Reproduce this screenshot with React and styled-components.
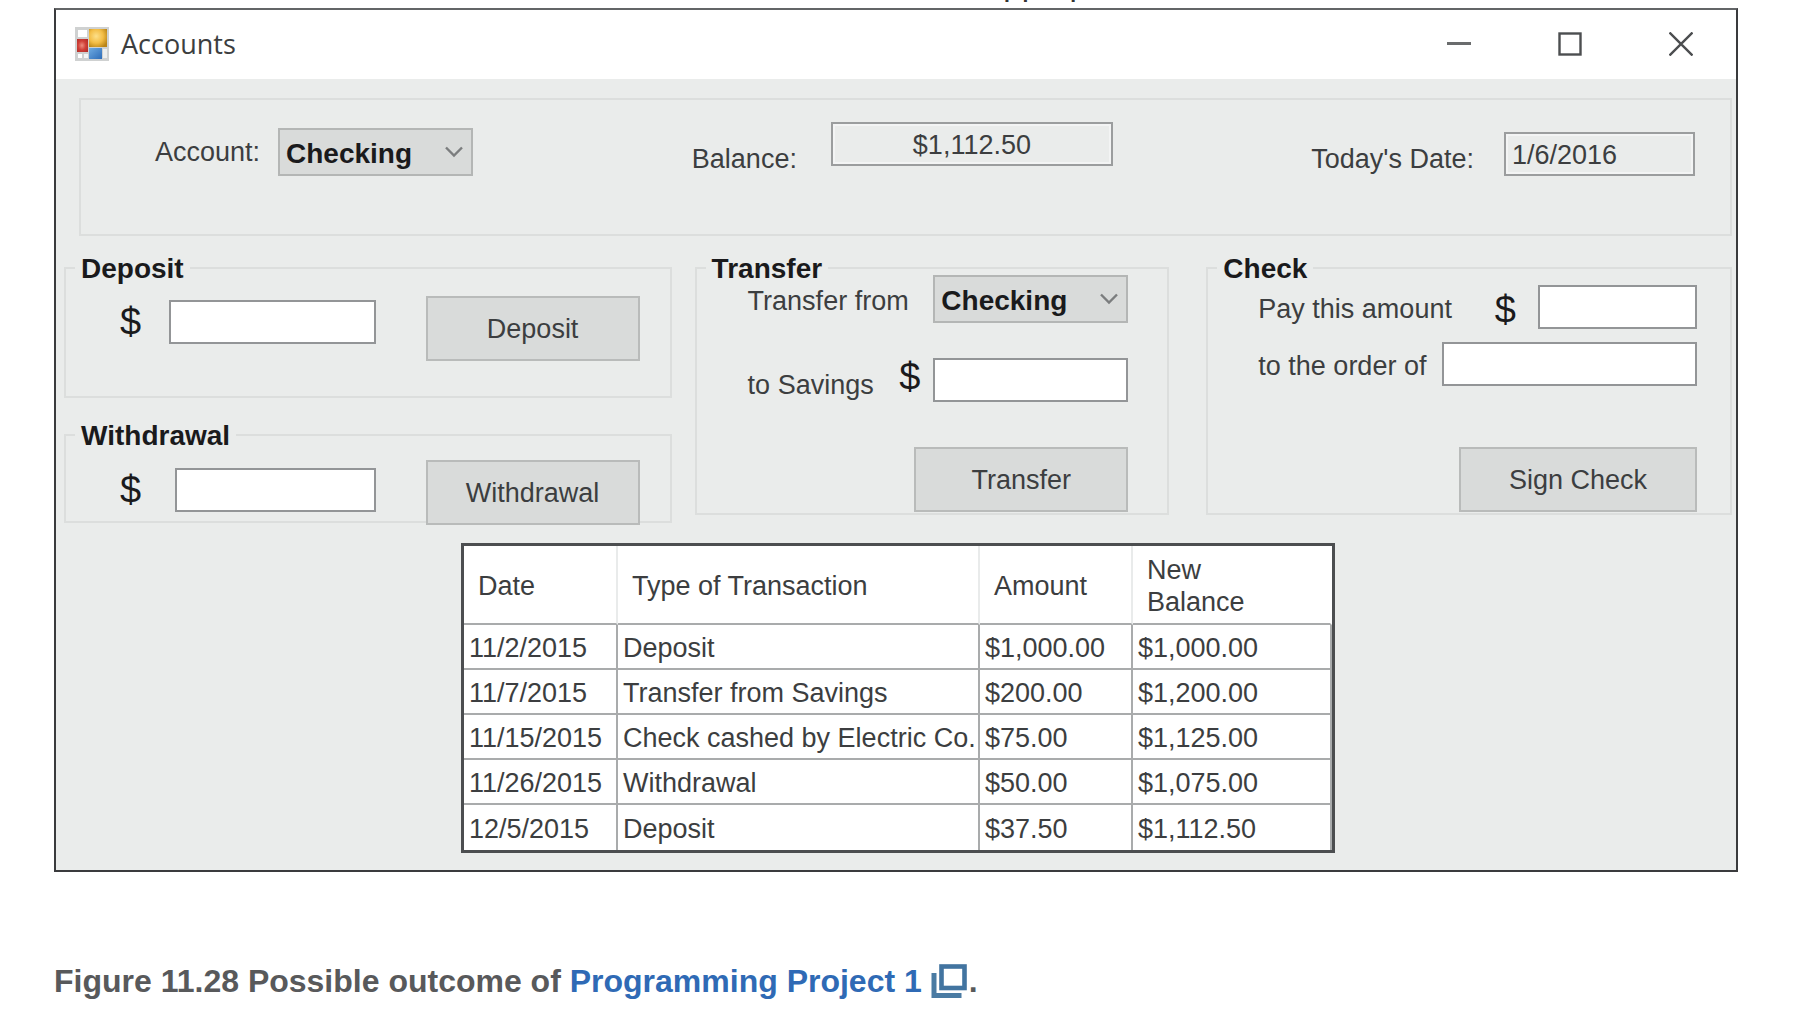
import React, { useState } from 'react';
import styled, { createGlobalStyle } from 'styled-components';

const GlobalStyle = createGlobalStyle`
  * {
    box-sizing: border-box;
  }

  body {
    margin: 0;
    background: #fff;
    color: #3c3e40;
    font-family: "Liberation Sans", Arial, sans-serif;
    font-size: 27px;
  }

  button,
  input,
  select {
    margin: 0;
    font-family: inherit;
    font-size: inherit;
    color: inherit;
    border-radius: 0;
  }
`;

const Page = styled.main`
  padding: 0 74px 0 54px;
`;

const Excerpt = styled.p`
  display: flex;
  align-items: flex-end;
  height: 2px;
  margin: 0 0 6px;
  padding-left: 931px;
  overflow: hidden;
  font-size: 33px;
  line-height: 26px;
  color: #333;
`;

const Window = styled.section`
  border: 2px solid #3a3b3d;
  border-top-color: #636567;
  background: #eaeceb;
`;

const TitleBar = styled.header`
  display: flex;
  align-items: center;
  height: 69px;
  padding: 0 0 2px 19px;
  background: #fff;
`;

const Title = styled.h1`
  flex: 1;
  margin: 0 0 0 12px;
  font-family: "Open Sans", "Noto Sans", sans-serif;
  font-size: 27px;
  font-weight: 400;
  line-height: 36px;
`;

const WindowButton = styled.button`
  display: flex;
  align-items: center;
  justify-content: center;
  width: 111px;
  height: 66px;
  padding: 0;
  border: 0;
  background: transparent;
`;

const Form = styled.form`
  padding: 19px 4px 17px 8px;
`;

const SummaryBar = styled.div`
  display: grid;
  grid-template-columns: 533fr 615fr auto;
  height: 138px;
  margin-left: 15px;
  padding: 22px 35px 0 74px;
  border: 2px solid #dcdedd;
`;

const Field = styled.div`
  display: flex;
  align-items: ${(props) => props.$align || 'flex-end'};
  height: ${(props) => props.$height || 54}px;
  align-self: start;
  margin-top: ${(props) => 54 - (props.$height || 54)}px;
`;

const Label = styled.label`
  line-height: 34px;
  white-space: nowrap;
`;

const Output = styled.input`
  width: ${(props) => props.$width}px;
  height: 44px;
  margin-left: ${(props) => props.$gap}px;
  align-self: ${(props) => props.$self || 'flex-end'};
  padding: 2px 6px 0;
  border: 2px solid #9b9d9e;
  background: #eaeceb;
  box-shadow: inset 0 0 0 2px #f3f4f4;
  text-align: ${(props) => props.$text || 'left'};
`;

const SelectBox = styled.span`
  display: grid;
  align-items: center;
  width: 195px;
  height: 48px;
`;

const NativeSelect = styled.select`
  grid-area: 1 / 1;
  width: 100%;
  height: 100%;
  padding: 2px 6px 0;
  border: 2px solid #b4b6b5;
  background: #d9dbda;
  color: #1a1a1c;
  font-size: 28px;
  font-weight: 700;
  appearance: none;
`;

const Chevron = styled.svg`
  grid-area: 1 / 1;
  justify-self: end;
  margin-right: 10px;
  pointer-events: none;
`;

const Columns = styled.div`
  display: grid;
  grid-template-columns: 608fr 23px 475fr 37px 526fr;
  align-items: start;
  margin-top: 25px;
`;

const LeftColumn = styled.div`
  display: flex;
  flex-direction: column;
  gap: 30px;
`;

const Group = styled.fieldset`
  grid-column: ${(props) => props.$column || 'auto'};
  min-width: 0;
  height: ${(props) => props.$height}px;
  margin: 0;
  padding: 0;
  border: 2px solid #dcdedd;
`;

const Legend = styled.legend`
  height: 14px;
  margin-left: 9px;
  padding: 0 6px;
  color: #1a1a1c;
  font-size: 28px;
  font-weight: 700;
  line-height: 16px;
`;

const MoneyRow = styled.div`
  display: grid;
  grid-template-columns: 1fr 214px;
  align-items: start;
  padding: ${(props) => props.$top}px 30px 0 54px;
`;

const MoneyField = styled.div`
  display: flex;
  align-items: center;
  gap: ${(props) => props.$gap}px;
  padding: ${(props) => props.$drop}px 50px 0 0;
`;

const Dollar = styled.span`
  color: #1a1a1c;
  font-size: 38px;
  line-height: 38px;
  align-self: ${(props) => props.$self || 'center'};
`;

const TextBox = styled.input`
  flex: 1;
  width: 100%;
  min-width: 0;
  height: 44px;
  padding: 0 6px;
  border: 2px solid #939597;
  background: #fff;
`;

const Button = styled.button`
  width: ${(props) => props.$width || 214}px;
  height: 65px;
  padding: 2px 0 0;
  border: 2px solid #b9bbba;
  background: #d9dbda;
`;

const Stack = styled.div`
  display: flex;
  flex-direction: column;
  align-items: flex-end;
  padding: ${(props) => props.$padding};
`;

const Line = styled.div`
  display: flex;
  align-items: center;
  justify-content: space-between;
  width: 100%;
  margin-bottom: ${(props) => props.$below}px;
`;

const LineLabel = styled(Label)`
  flex: 1;
  padding-top: 4px;
  align-self: ${(props) => props.$self || 'center'};
`;

const Fixed = styled.div`
  display: flex;
  width: ${(props) => props.$width}px;
  margin-left: ${(props) => props.$gap || 0}px;
`;

const Table = styled.table`
  width: 874px;
  max-width: 100%;
  margin: 20px auto 0;
  border: 3px solid #4c4e50;
  border-spacing: 0;
  table-layout: fixed;
  background: #fff;
`;

const Col = styled.col`
  width: ${(props) => (props.$width ? `${props.$width}px` : 'auto')};
`;

const HeadCell = styled.th`
  height: 79px;
  padding: 3px 60px 0 14px;
  border-right: 2px solid #e9ebeb;
  border-bottom: 2px solid #a9abac;
  font-weight: 400;
  line-height: 32px;
  text-align: left;
  white-space: ${(props) => (props.$wrap ? 'normal' : 'nowrap')};

  &:last-child {
    border-right-color: #fff;
  }
`;

const Cell = styled.td`
  height: 45px;
  padding: 2px 0 0 5px;
  border-right: 2px solid #a9abac;
  border-bottom: 2px solid #a9abac;
  line-height: 32px;
  white-space: nowrap;

  tr:last-child > & {
    border-bottom: 0;
  }
`;

const Caption = styled.p`
  display: flex;
  align-items: center;
  margin: 89px 0 0;
  color: #58595b;
  font-size: 32px;
  font-weight: 700;
  line-height: 40px;
  white-space: pre;
`;

const CaptionLink = styled.a`
  display: inline-flex;
  align-items: center;
  gap: 9px;
  margin-right: 2px;
  color: #2f6ab5;
  text-decoration: none;
`;

const transactions = [
  { date: '11/2/2015', type: 'Deposit', amount: '$1,000.00', balance: '$1,000.00' },
  { date: '11/7/2015', type: 'Transfer from Savings', amount: '$200.00', balance: '$1,200.00' },
  { date: '11/15/2015', type: 'Check cashed by Electric Co.', amount: '$75.00', balance: '$1,125.00' },
  { date: '11/26/2015', type: 'Withdrawal', amount: '$50.00', balance: '$1,075.00' },
  { date: '12/5/2015', type: 'Deposit', amount: '$37.50', balance: '$1,112.50' },
];

const AppIcon = () => (
  <svg width="34" height="34" viewBox="0 0 34 34" aria-hidden="true">
    <defs>
      <radialGradient id="gold" cx="0.4" cy="0.4" r="0.7">
        <stop offset="0" stopColor="#fde08a" />
        <stop offset="0.55" stopColor="#f3bd45" />
        <stop offset="1" stopColor="#b98416" />
      </radialGradient>
      <radialGradient id="red" cx="0.45" cy="0.5" r="0.7">
        <stop offset="0" stopColor="#ee8d80" />
        <stop offset="0.5" stopColor="#d04038" />
        <stop offset="1" stopColor="#b02c28" />
      </radialGradient>
      <linearGradient id="blue" x1="0" y1="0" x2="1" y2="1">
        <stop offset="0" stopColor="#6fabe2" />
        <stop offset="1" stopColor="#2d6cb8" />
      </linearGradient>
    </defs>
    <rect x="0" y="0" width="34" height="34" fill="#cfd1d1" />
    <rect x="3" y="3" width="9" height="7" fill="#fff" />
    <rect x="3" y="27" width="4" height="4" fill="#fff" />
    <rect x="9" y="27" width="4" height="4" fill="#f5f5f5" />
    <rect x="28" y="22" width="4" height="9" fill="#eceeee" />
    <rect x="2" y="12" width="11" height="13" fill="url(#red)" />
    <rect x="14" y="2" width="18" height="18" fill="url(#gold)" />
    <rect x="14" y="21" width="13" height="11" fill="url(#blue)" />
  </svg>
);

const PopupIcon = () => (
  <svg width="36" height="35" viewBox="0 0 36 35" aria-hidden="true">
    <path d="M3 9V31.5H30.5" fill="none" stroke="#4a7ba3" strokeWidth="5" />
    <rect x="10.5" y="2.5" width="23" height="21.5" fill="none" stroke="#4274a0" strokeWidth="4.6" />
  </svg>
);

const AccountSelect = ({ id, value, onChange }) => (
  <SelectBox>
    <NativeSelect id={id} value={value} onChange={(event) => onChange(event.target.value)}>
      <option>Checking</option>
      <option>Savings</option>
    </NativeSelect>
    <Chevron width="18" height="12" viewBox="0 0 18 12" aria-hidden="true">
      <path d="M1 1.5L9 9.5L17 1.5" fill="none" stroke="#7b7d7e" strokeWidth="2.4" />
    </Chevron>
  </SelectBox>
);

const App = () => {
  const [account, setAccount] = useState('Checking');
  const [source, setSource] = useState('Checking');

  return (
    <Page>
      <GlobalStyle />
      <Excerpt>appropriate</Excerpt>

      <Window>
        <TitleBar>
          <AppIcon />
          <Title>Accounts</Title>
          <WindowButton type="button" aria-label="Minimize">
            <svg width="24" height="24" viewBox="0 0 24 24">
              <path d="M0 11.5H24" stroke="#6a6c6d" strokeWidth="3" />
            </svg>
          </WindowButton>
          <WindowButton type="button" aria-label="Maximize">
            <svg width="24" height="24" viewBox="0 0 24 24">
              <rect x="1.5" y="1.5" width="21" height="21" fill="none" stroke="#4c4e50" strokeWidth="2.4" />
            </svg>
          </WindowButton>
          <WindowButton type="button" aria-label="Close">
            <svg width="24" height="24" viewBox="0 0 24 24">
              <path d="M0.5 0.5L23.5 23.5M23.5 0.5L0.5 23.5" stroke="#4c4e50" strokeWidth="2.4" />
            </svg>
          </WindowButton>
        </TitleBar>

        <Form onSubmit={(event) => event.preventDefault()}>
          <SummaryBar>
            <Field $align="center" $height={48}>
              <Fixed $width={123}>
                <Label htmlFor="account">Account:</Label>
              </Fixed>
              <AccountSelect id="account" value={account} onChange={setAccount} />
            </Field>
            <Field>
              <Label htmlFor="balance">Balance:</Label>
              <Output id="balance" $width={282} $gap={34} $self="flex-start" $text="center" value="$1,112.50" readOnly />
            </Field>
            <Field>
              <Label htmlFor="today">Today's Date:</Label>
              <Output id="today" $width={191} $gap={30} value="1/6/2016" readOnly />
            </Field>
          </SummaryBar>

          <Columns>
            <LeftColumn>
              <Group $height={137}>
                <Legend>Deposit</Legend>
                <MoneyRow $top={21}>
                  <MoneyField $gap={28} $drop={4}>
                    <Dollar>$</Dollar>
                    <TextBox aria-label="Deposit amount" />
                  </MoneyField>
                  <Button type="button">Deposit</Button>
                </MoneyRow>
              </Group>
              <Group $height={95}>
                <Legend>Withdrawal</Legend>
                <MoneyRow $top={18}>
                  <MoneyField $gap={34} $drop={8}>
                    <Dollar>$</Dollar>
                    <TextBox aria-label="Withdrawal amount" />
                  </MoneyField>
                  <Button type="button">Withdrawal</Button>
                </MoneyRow>
              </Group>
            </LeftColumn>

            <Group $column={3} $height={254}>
              <Legend>Transfer</Legend>
              <Stack $padding="0 39px 0 51px">
                <Line $below={35}>
                  <LineLabel htmlFor="source">Transfer from</LineLabel>
                  <AccountSelect id="source" value={source} onChange={setSource} />
                </Line>
                <Line $below={45}>
                  <LineLabel htmlFor="transfer" $self="flex-end">to Savings</LineLabel>
                  <Dollar $self="flex-start">$</Dollar>
                  <Fixed $width={195} $gap={13}>
                    <TextBox id="transfer" />
                  </Fixed>
                </Line>
                <Button type="button">Transfer</Button>
              </Stack>
            </Group>

            <Group $column={5} $height={254}>
              <Legend>Check</Legend>
              <Stack $padding="10px 33px 0 50px">
                <Line $below={13}>
                  <LineLabel htmlFor="pay">Pay this amount</LineLabel>
                  <Dollar $self="flex-end">$</Dollar>
                  <Fixed $width={159} $gap={22}>
                    <TextBox id="pay" />
                  </Fixed>
                </Line>
                <Line $below={61}>
                  <LineLabel htmlFor="payee">to the order of</LineLabel>
                  <Fixed $width={255}>
                    <TextBox id="payee" />
                  </Fixed>
                </Line>
                <Button type="button" $width={238}>Sign Check</Button>
              </Stack>
            </Group>
          </Columns>

          <Table>
            <colgroup>
              <Col $width={154} />
              <Col $width={362} />
              <Col $width={153} />
              <Col />
            </colgroup>
            <thead>
              <tr>
                <HeadCell>Date</HeadCell>
                <HeadCell>Type of Transaction</HeadCell>
                <HeadCell>Amount</HeadCell>
                <HeadCell $wrap>New Balance</HeadCell>
              </tr>
            </thead>
            <tbody>
              {transactions.map((row) => (
                <tr key={row.date}>
                  <Cell>{row.date}</Cell>
                  <Cell>{row.type}</Cell>
                  <Cell>{row.amount}</Cell>
                  <Cell>{row.balance}</Cell>
                </tr>
              ))}
            </tbody>
          </Table>
        </Form>
      </Window>

      <Caption>
        {'Figure 11.28 Possible outcome of '}
        <CaptionLink href="#project-1">
          Programming Project 1
          <PopupIcon />
        </CaptionLink>
        .
      </Caption>
    </Page>
  );
};

export default App;
